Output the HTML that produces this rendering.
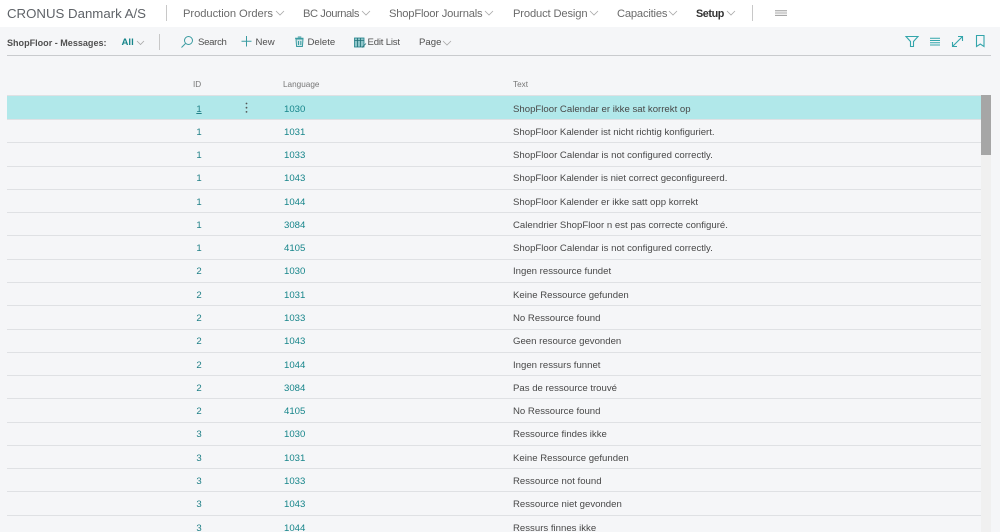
<!DOCTYPE html>
<html><head><meta charset="utf-8"><style>
html,body{margin:0;padding:0}
html{background:#f5f6f8}
body{width:1000px;height:532px;overflow:hidden;background:#f5f6f8;position:relative;font-family:"Liberation Sans",sans-serif;color:#4a4a4a;filter:blur(.25px)}
.a{position:absolute;white-space:nowrap}
#top{left:0;top:0;width:1000px;height:27px;background:#fff}
.m{top:6.5px;font-size:11.2px;line-height:14px;color:#6b6b6b}
.t{top:36.5px;font-size:9.6px;line-height:12px;color:#505050}
.h{top:79px;font-size:8.2px;line-height:11px;color:#777}
.r{position:absolute;left:7px;width:974px;height:23.28px;border-top:1px solid #dfe1e4;box-sizing:border-box}
.r span{position:absolute;top:6.8px;font-size:9.6px;line-height:12px}
.i{left:184px;width:16px;text-align:center;color:#1f7f86}
.l{left:277px;color:#16858a}
.x{left:506px;color:#484848}
svg{position:absolute;overflow:visible;fill:none}
</style></head><body>
<div id="top" class="a"></div>
<div class="a" style="left:7px;top:5px;font-size:13.24px;line-height:17px;color:#5f6368">CRONUS Danmark A/S</div>
<div class="a" style="left:166px;top:5px;width:1px;height:16px;background:#c8c8c8"></div>
<div class="a m" style="left:183px;letter-spacing:-.05px">Production Orders</div>
<div class="a m" style="left:303px;letter-spacing:-.45px">BC Journals</div>
<div class="a m" style="left:389px;letter-spacing:-.2px">ShopFloor Journals</div>
<div class="a m" style="left:513px;letter-spacing:-.15px">Product Design</div>
<div class="a m" style="left:617px;letter-spacing:-.2px">Capacities</div>
<div class="a m" style="left:696px;color:#333;font-weight:bold;font-size:10.8px;letter-spacing:-.4px">Setup</div>
<div class="a" style="left:752px;top:5px;width:1px;height:16px;background:#c8c8c8"></div>
<svg style="left:0;top:0" width="1000" height="60" stroke="#a8a8a8" stroke-width=".8">
<path d="M276 11l4 4 4-4M362 11l4 4 4-4M485 11l4 4 4-4M590 11l4 4 4-4M669 11l4 4 4-4M727 11l4 4 4-4M137 41l3.500 3.500 3.500-3.500M443 41l4 4 4-4"/>
<path stroke="#8a8a8a" d="M775 10.800h12M775 13h12M775 15.300h12"/>
<circle cx="188.500" cy="40.500" r="4" stroke="#3a9ba1" stroke-width="1"/>
<path stroke="#3a9ba1" stroke-width="1" d="M185.500 43.500l-4 4"/>
<path stroke="#3a9ba1" stroke-width="1" d="M246.500 36v10.500M241.500 41.300h10"/>
<path stroke="#3a9ba1" stroke-width="1" fill="#cfe6e8" d="M296 39h7l-.6 7.500h-5.800z"/>
<path stroke="#3a9ba1" stroke-width="1" d="M295 38.200h8.500M297.800 37h3.500M298.500 41v4M300.800 41v4"/>
<rect x="354.500" y="38" width="9.500" height="9" stroke="#1f8189" fill="#8fc6ca"/>
<path stroke="#1f6f76" d="M354.500 40.500h9.500M357.500 38v9M360.500 38v9M362 47.500l4-4"/>
<path stroke="#33a5ab" stroke-width="1.100" d="M906 36.500h12l-4.500 5v5h-3v-5z"/>
<path stroke="#33a5ab" stroke-width="1" d="M930 38.200h10M930 40.500h10M930 42.800h10M930 45h10"/>
<path stroke="#33a5ab" stroke-width="1.100" d="M952.500 46.500l10-10M958 36.500h4.500v4.500M952.500 42v4.500h4.500M976.500 35.500h7.500v11l-3.700-2.500-3.800 2.500z"/>
</svg>
<div class="a" style="left:7px;top:36.500px;font-size:9.05px;line-height:12px;font-weight:bold;color:#505050">ShopFloor - Messages:</div>
<div class="a" style="left:121.500px;top:36.500px;font-size:9.600px;line-height:12px;font-weight:bold;color:#16858a">All</div>
<div class="a" style="left:159px;top:34px;width:1px;height:16px;background:#c8c8c8"></div>
<div class="a t" style="left:198px;letter-spacing:-.3px">Search</div>
<div class="a t" style="left:255.500px">New</div>
<div class="a t" style="left:307.500px">Delete</div>
<div class="a t" style="left:367.500px;letter-spacing:-.2px">Edit List</div>
<div class="a t" style="left:419px">Page</div>
<div class="a" style="left:7px;top:55px;width:984px;height:1px;background:#c9cbce"></div>
<div class="a h" style="left:193px">ID</div>
<div class="a h" style="left:283px">Language</div>
<div class="a h" style="left:513px">Text</div>
<div class="a" style="left:981px;top:95px;width:10px;height:437px;background:#f0f0f0"></div>
<div class="a" style="left:981px;top:95px;width:10px;height:60px;background:#a6a6a6"></div>

<div class="r" style="top:95px;height:24px;background:#b1e8ea;background-clip:padding-box"><span class="i" style="top:7.500px;text-decoration:underline">1</span><span class="l" style="top:7.500px">1030</span><span class="x" style="top:7.500px">ShopFloor Calendar er ikke sat korrekt op</span></div>
<div class="r" style="top:118.980px"><span class="i">1</span><span class="l">1031</span><span class="x">ShopFloor Kalender ist nicht richtig konfiguriert.</span></div>
<div class="r" style="top:142.260px"><span class="i">1</span><span class="l">1033</span><span class="x">ShopFloor Calendar is not configured correctly.</span></div>
<div class="r" style="top:165.540px"><span class="i">1</span><span class="l">1043</span><span class="x">ShopFloor Kalender is niet correct geconfigureerd.</span></div>
<div class="r" style="top:188.820px"><span class="i">1</span><span class="l">1044</span><span class="x">ShopFloor Kalender er ikke satt opp korrekt</span></div>
<div class="r" style="top:212.100px"><span class="i">1</span><span class="l">3084</span><span class="x">Calendrier ShopFloor n est pas correcte configuré.</span></div>
<div class="r" style="top:235.380px"><span class="i">1</span><span class="l">4105</span><span class="x">ShopFloor Calendar is not configured correctly.</span></div>
<div class="r" style="top:258.660px"><span class="i">2</span><span class="l">1030</span><span class="x">Ingen ressource fundet</span></div>
<div class="r" style="top:281.940px"><span class="i">2</span><span class="l">1031</span><span class="x">Keine Ressource gefunden</span></div>
<div class="r" style="top:305.220px"><span class="i">2</span><span class="l">1033</span><span class="x">No Ressource found</span></div>
<div class="r" style="top:328.500px"><span class="i">2</span><span class="l">1043</span><span class="x">Geen resource gevonden</span></div>
<div class="r" style="top:351.780px"><span class="i">2</span><span class="l">1044</span><span class="x">Ingen ressurs funnet</span></div>
<div class="r" style="top:375.060px"><span class="i">2</span><span class="l">3084</span><span class="x">Pas de ressource trouvé</span></div>
<div class="r" style="top:398.340px"><span class="i">2</span><span class="l">4105</span><span class="x">No Ressource found</span></div>
<div class="r" style="top:421.620px"><span class="i">3</span><span class="l">1030</span><span class="x">Ressource findes ikke</span></div>
<div class="r" style="top:444.900px"><span class="i">3</span><span class="l">1031</span><span class="x">Keine Ressource gefunden</span></div>
<div class="r" style="top:468.180px"><span class="i">3</span><span class="l">1033</span><span class="x">Ressource not found</span></div>
<div class="r" style="top:491.460px"><span class="i">3</span><span class="l">1043</span><span class="x">Ressource niet gevonden</span></div>
<div class="r" style="top:514.740px;height:17.260px;overflow:hidden"><span class="i">3</span><span class="l">1044</span><span class="x">Ressurs finnes ikke</span></div>
<svg style="left:0;top:0" width="1000" height="120"><circle cx="246.500" cy="103.500" r=".9" fill="#555"/><circle cx="246.500" cy="107.700" r=".9" fill="#555"/><circle cx="246.500" cy="111.900" r=".9" fill="#555"/></svg>
</body></html>
